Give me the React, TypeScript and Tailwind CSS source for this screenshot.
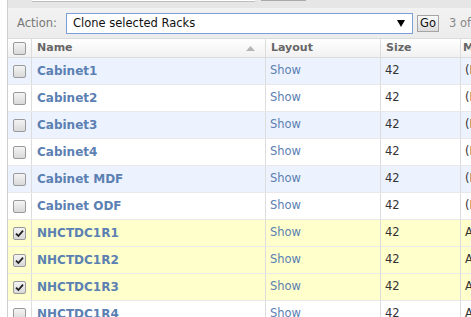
import React from "react";

type Row = { name: string; checked: boolean; last: string };

const rows: Row[] = [
  { name: "Cabinet1", checked: false, last: "(None)" },
  { name: "Cabinet2", checked: false, last: "(None)" },
  { name: "Cabinet3", checked: false, last: "(None)" },
  { name: "Cabinet4", checked: false, last: "(None)" },
  { name: "Cabinet MDF", checked: false, last: "(None)" },
  { name: "Cabinet ODF", checked: false, last: "(None)" },
  { name: "NHCTDC1R1", checked: true, last: "Auto" },
  { name: "NHCTDC1R2", checked: true, last: "Auto" },
  { name: "NHCTDC1R3", checked: true, last: "Auto" },
  { name: "NHCTDC1R4", checked: false, last: "Auto" },
];

function Check({ checked }: { checked: boolean }) {
  return (
    <div className="w-[13px] h-[13px] rounded-[2px] border border-[#9a9a9a] bg-gradient-to-b from-[#f4f4f4] to-[#d9d9d9] flex items-center justify-center">
      {checked && (
        <svg width="9" height="9" viewBox="0 0 9 9">
          <path d="M1 4.6 L3.4 7 L8 1.6" fill="none" stroke="#222" strokeWidth="1.8" />
        </svg>
      )}
    </div>
  );
}

export default function App() {
  return (
    <div
      className="w-[471px] h-[317px] overflow-hidden bg-white"
      style={{ fontFamily: '"DejaVu Sans", Verdana, sans-serif' }}
    >
      <div className="ml-[7px] border-l border-[#cfcfcf] h-full">
        {/* toolbar remnant */}
        <div className="h-[8px] bg-[#e6e6e6] flex items-start">
          <div className="ml-[24px] w-[223px] h-[2px] bg-white border-b border-[#bdbdbd]" />
          <div className="ml-[6px] w-[45px] h-[1px] bg-[#a9a9a9]" />
        </div>
        {/* actions bar */}
        <div className="h-[30px] bg-gradient-to-b from-[#f2f2f2] to-[#ececec] flex items-center pt-[1px] text-[11.5px] whitespace-nowrap">
          <span className="ml-[9px] text-[#777] w-[49px]">Action:</span>
          <div className="w-[347px] h-[21px] border border-[#7b9fd6] bg-white flex items-center justify-between pl-[6px] pr-[7px] text-[#111]">
            <span>Clone selected Racks</span>
            <svg width="8" height="7" viewBox="0 0 8 7">
              <polygon points="0,0 8,0 4,7" fill="#000" />
            </svg>
          </div>
          <div className="ml-[4px] w-[22px] h-[17px] border border-[#a5a5a5] bg-gradient-to-b from-[#fafafa] to-[#dcdcdc] flex items-center justify-center text-[11.5px] text-[#111]">
            Go
          </div>
          <span className="ml-[10px] text-[#888]">3 of</span>
        </div>
        {/* header */}
        <div className="grid grid-cols-[24px_234px_115px_80px_200px] h-[20px] border-t border-b border-[#dcdcdc] bg-gradient-to-b from-[#ffffff] to-[#f1f1f1] text-[11px] font-bold text-[#666] whitespace-nowrap">
          <div className="border-r border-[#dcdcdc] flex items-center justify-center">
            <Check checked={false} />
          </div>
          <div className="border-r border-[#dcdcdc] flex items-center justify-between pl-[5px] pr-[10px]">
            <span>Name</span>
            <svg width="9" height="5" viewBox="0 0 9 5">
              <polygon points="0,5 9,5 4.5,0" fill="#b5b5b5" />
            </svg>
          </div>
          <div className="border-r border-[#dcdcdc] flex items-center pl-[5px]">Layout</div>
          <div className="border-r border-[#dcdcdc] flex items-center pl-[5px]">Size</div>
          <div className="flex items-center pl-[2px] overflow-hidden">Model</div>
        </div>
        {/* rows */}
        {rows.map((r, i) => {
          const bg = r.checked ? "bg-[#ffffcc]" : i % 2 === 0 ? "bg-[#edf3fe]" : "bg-white";
          return (
            <div
              key={r.name}
              className={`grid grid-cols-[24px_234px_115px_80px_200px] h-[27px] border-b border-[#e9e9e9] text-[11.5px] whitespace-nowrap ${bg}`}
            >
              <div className="border-r border-[#dcdcdc] flex items-center justify-center">
                <Check checked={r.checked} />
              </div>
              <div className="border-r border-[#dcdcdc] flex items-center pl-[5px] font-bold text-[12px] text-[#5b80b2]">
                {r.name}
              </div>
              <div className="border-r border-[#dcdcdc] flex items-center pl-[4px] text-[#5b80b2]">Show</div>
              <div className="border-r border-[#dcdcdc] flex items-center pl-[4px] text-[#333]">42</div>
              <div className="flex items-center pl-[4px] text-[#333] overflow-hidden">{r.last}</div>
            </div>
          );
        })}
      </div>
    </div>
  );
}
